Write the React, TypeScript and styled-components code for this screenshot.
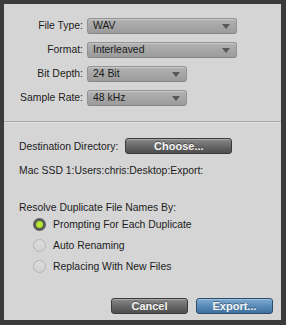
import React from "react";
import styled, { createGlobalStyle } from "styled-components";

const Global = createGlobalStyle`
  html, body { margin: 0; padding: 0; background: #3b3b3b; }
  body { font-family: "Liberation Sans", Arial, Helvetica, sans-serif; font-size: 10.4px; color: #1c1c1c; }
`;

const Dialog = styled.div`
  margin: 4px 0 0 4px;
  width: 277px;
  height: 316px;
  box-sizing: border-box;
  background: #d5d5d5;
  display: flex;
  flex-direction: column;
`;

const FormatGrid = styled.div`
  display: grid;
  grid-template-columns: 79px auto;
  column-gap: 4px;
  row-gap: 8px;
  padding-top: 14px;
  align-items: center;
`;

const Label = styled.div`
  text-align: right;
  white-space: nowrap;
  line-height: 16px;
`;

const Select = styled.div<{ $w: number }>`
  width: ${(p) => p.$w}px;
  height: 16px;
  box-sizing: border-box;
  border-radius: 3px;
  background: linear-gradient(#b3b3b3, #a4a4a4 60%, #9c9c9c);
  border: 1px solid #939393;
  border-bottom-color: #868686;
  box-shadow: inset 0 1px 0 rgba(255,255,255,0.25);
  display: flex;
  align-items: center;
  justify-content: space-between;
  padding: 0 6px 0 5px;
  color: #1a1a1a;
  line-height: 14px;
`;

const Caret = () => (
  <svg width="8" height="5" viewBox="0 0 8 5">
    <polygon points="0,0 8,0 4,5" fill="#575757" />
  </svg>
);

const Divider = styled.div`
  margin-top: 15px;
  height: 1px;
  background: #a6a6a6;
  border-bottom: 1px solid #e2e2e2;
`;

const Section = styled.div`
  padding-left: 15px;
  display: flex;
  flex-direction: column;
`;

const DestRow = styled.div`
  margin-top: 15px;
  display: flex;
  align-items: center;
  gap: 7px;
`;

const DarkButton = styled.div<{ $w: number; $blue?: boolean }>`
  flex-shrink: 0;
  width: ${(p) => p.$w}px;
  height: 16px;
  box-sizing: border-box;
  border-radius: 3px;
  border: 1px solid ${(p) => (p.$blue ? "#2b4c6c" : "#3a3a3a")};
  background: ${(p) =>
    p.$blue
      ? "linear-gradient(#7eaad0, #5a8cb9 50%, #3f719e)"
      : "linear-gradient(#8a8a8a, #686868 50%, #4e4e4e)"};
  box-shadow: inset 0 1px 0 rgba(255,255,255,0.25);
  color: #f4f4f4;
  font-weight: bold;
  font-size: 11px;
  display: flex;
  align-items: center;
  justify-content: center;
  text-shadow: 0 -1px 0 rgba(0,0,0,0.35);
`;

const PathText = styled.div`
  margin-top: 10px;
  line-height: 13px;
`;

const ResolveTitle = styled.div`
  margin-top: 24px;
  line-height: 13px;
`;

const RadioList = styled.div`
  margin-top: 4px;
  padding-left: 14px;
  display: flex;
  flex-direction: column;
  gap: 8px;
`;

const RadioRow = styled.div`
  display: flex;
  align-items: center;
  gap: 7px;
  line-height: 13px;
`;

const RadioDot = styled.div<{ $on?: boolean }>`
  width: 13px;
  height: 13px;
  box-sizing: border-box;
  border-radius: 50%;
  border: ${(p) => (p.$on ? "3px solid #5b5b5b" : "1px solid #b4b4b4")};
  background: ${(p) =>
    p.$on ? "radial-gradient(circle, #c8f03a 0%, #9fd11a 100%)" : "linear-gradient(#dedede, #d2d2d2)"};
`;

const Footer = styled.div`
  margin-top: auto;
  margin-bottom: 6px;
  padding-right: 8px;
  display: flex;
  justify-content: flex-end;
  gap: 8px;
`;

export default function App() {
  return (
    <>
      <Global />
      <Dialog>
        <FormatGrid>
          <Label>File Type:</Label>
          <Select $w={150}>
            <span>WAV</span>
            <Caret />
          </Select>
          <Label>Format:</Label>
          <Select $w={150}>
            <span>Interleaved</span>
            <Caret />
          </Select>
          <Label>Bit Depth:</Label>
          <Select $w={100}>
            <span>24 Bit</span>
            <Caret />
          </Select>
          <Label>Sample Rate:</Label>
          <Select $w={100}>
            <span>48 kHz</span>
            <Caret />
          </Select>
        </FormatGrid>
        <Divider />
        <Section>
          <DestRow>
            <span>Destination Directory:</span>
            <DarkButton $w={107}>Choose...</DarkButton>
          </DestRow>
          <PathText>Mac SSD 1:Users:chris:Desktop:Export:</PathText>
          <ResolveTitle>Resolve Duplicate File Names By:</ResolveTitle>
          <RadioList>
            <RadioRow>
              <RadioDot $on />
              <span>Prompting For Each Duplicate</span>
            </RadioRow>
            <RadioRow>
              <RadioDot />
              <span>Auto Renaming</span>
            </RadioRow>
            <RadioRow>
              <RadioDot />
              <span>Replacing With New Files</span>
            </RadioRow>
          </RadioList>
        </Section>
        <Footer>
          <DarkButton $w={77}>Cancel</DarkButton>
          <DarkButton $w={77} $blue>Export...</DarkButton>
        </Footer>
      </Dialog>
    </>
  );
}
